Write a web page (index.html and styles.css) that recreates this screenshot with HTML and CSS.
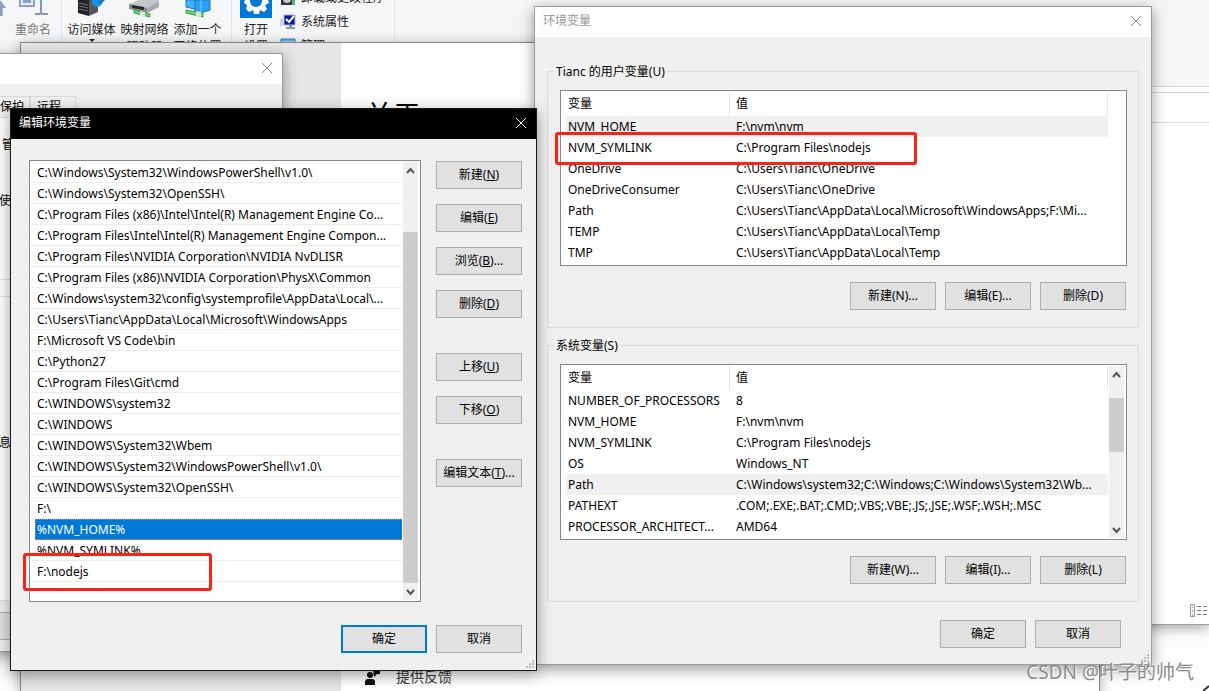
FILE: index.html
```html
<!DOCTYPE html>
<html lang="zh-CN">
<head>
<meta charset="utf-8">
<title>环境变量</title>
<link rel="stylesheet" href="styles.css">
</head>
<body>
<main class="desktop">

  <section class="explorer" aria-label="文件资源管理器">
    <div class="ribbon">
      <div class="ribbon-group group-rename">
        <svg class="cut-arrow" width="9" height="18" viewBox="0 0 9 18"><path d="M0 0h1l6 8H3v9H0z" fill="#8fa0bd"/></svg>
        <button class="tool faded">
          <svg width="34" height="18" viewBox="0 0 34 18"><path d="M4 0v6h14V0" fill="#e9edf5" stroke="#8fa1c0" stroke-width="2"/><path d="M7 0h8v3H7z" fill="#8fa1c0"/><path d="M19 14h4q2 0 2-2V0M32 14h-5q-2 0-2-2V0" fill="none" stroke="#8497b8" stroke-width="2"/></svg>
          <span>重命名</span>
        </button>
      </div>
      <div class="ribbon-group group-network">
        <button class="tool">
          <svg width="34" height="18" viewBox="0 0 34 18"><path d="M3 0l11-1v17L3 13z" fill="#202225"/><path d="M14 0l9 0v12l-9 4z" fill="#54585d"/><path d="M4 3l9 2M4 6l9 2M4 9l9 2" stroke="#777" stroke-width="1"/><path d="M17 0l9-2 2 4q-2 5-7 5-5-2-4-7z" fill="#1592e6"/><path d="M24 3l6-4" stroke="#126bb5" stroke-width="2"/></svg>
          <span>访问媒体<i class="caret"></i></span>
        </button>
        <button class="tool">
          <svg width="34" height="18" viewBox="0 0 34 18"><path d="M1 4l10-4h20v5L19 12 1 8z" fill="#c5c8ca"/><path d="M1 4l18 4v5L1 9z" fill="#868b8e"/><path d="M19 8l12-6v5l-12 6z" fill="#a6aaad"/><path d="M4 5l12 2v3L4 8z" fill="#26292b"/><path d="M6 10l16 4v3L6 13z" fill="#70d276" stroke="#3c9d46"/><path d="M12 11l5 1v5l-5-1z" fill="#d8e8d9"/></svg>
          <span>映射网络<br>驱动器</span>
        </button>
        <button class="tool">
          <svg width="34" height="18" viewBox="0 0 34 18"><path d="M5 0h12v10L5 7z" fill="#42b3fb" stroke="#147bc4"/><path d="M14 0h15v10l-13 4-2-3z" fill="#2ca0f2" stroke="#1173bb"/><path d="M20 0v13" stroke="#81ccff"/><path d="M5 10l17 3v4L5 13z" fill="#70d276" stroke="#3c9d46"/><path d="M15 11l5 1v5l-5-1z" fill="#d8e8d9"/></svg>
          <span>添加一个<br>网络位置</span>
        </button>
      </div>
      <div class="ribbon-group group-system">
        <button class="tool">
          <svg width="32" height="18" viewBox="0 0 32 18"><path d="M0 0h32v18H0z" fill="#0078d7"/><path d="M5 0l-1 3 3 2-1 4 3 3 4-2 1 4h5l1-4 4 2 3-3-2-4 4-2-1-3z" fill="#fff"/><circle cx="16" cy="1" r="6" fill="#0078d7"/></svg>
          <span>打开<br>设置</span>
        </button>
        <ul class="commands">
          <li><svg width="16" height="16" viewBox="0 0 16 16"><path d="M1 0h11v15H1z" fill="#343638"/><circle cx="7" cy="9" r="4" fill="#c7c9ca"/><circle cx="7" cy="9" r="1" fill="#222"/><path d="M12 8h3v7h-3z" fill="#5daa75"/></svg>卸载或更改程序</li>
          <li><svg width="16" height="16" viewBox="0 0 16 16"><path d="M4 1h11v10H4z" fill="#0717a4" stroke="#a8b5c6"/><path d="M6 5l3 3 5-6" fill="none" stroke="#fff" stroke-width="2"/><path d="M9 11h3v2h3v2H6v-2h3z" fill="#8b98a8"/><path d="M0 5h3v7H0z" fill="#cbd3dc"/></svg>系统属性</li>
          <li><svg width="16" height="16" viewBox="0 0 16 16"><path d="M1 1h14v12H1z" fill="#68b7e6" stroke="#397eaa"/><path d="M2 4h12" stroke="#eaf7ff"/></svg>管理</li>
        </ul>
      </div>
    </div>
    <div class="address-bar"></div>
    <div class="file-area"></div>
    <footer class="status">
      <svg width="17" height="14" viewBox="0 0 17 14"><path d="M.5.5h4v12h-4z" fill="#f5f5f5" stroke="#999"/><path d="M2 3h1M2 7h1M2 11h1" stroke="#8b5555"/><path d="M7 2.500h4m2 0h4M7 6.500h4m2 0h4M7 10.500h4m2 0h4" stroke="#777"/></svg>
    </footer>
  </section>

  <section class="settings" aria-label="设置">
    <aside class="settings-nav"></aside>
    <div class="settings-page">
      <h1>关于</h1>
      <a class="feedback" href="#feedback">
        <svg width="16" height="16" viewBox="0 0 16 16"><circle cx="5" cy="6" r="3" fill="#111"/><path d="M0 16v-3q0-3 3-3h4q3 0 3 3v3zM8 1h7v4h-3l-3 3z" fill="#111"/></svg>
        <span>提供反馈</span>
      </a>
    </div>
  </section>

  <section class="window properties" aria-label="系统属性">
    <header class="titlebar">
      <span></span>
      <button class="close" aria-label="关闭"><svg width="12" height="12" viewBox="0 0 12 12"><path d="M1 1l10 10M11 1L1 11"/></svg></button>
    </header>
    <div class="tabs"><button>保护</button><button>远程</button></div>
    <div class="properties-page">
      <p>管</p>
      <p class="second-note">使</p>
      <div class="blank-group"></div>
      <p class="third-note">息</p>
    </div>
    <footer class="properties-footer"><button class="btn" aria-label="确定"></button></footer>
  </section>

  <section class="window environment" aria-label="环境变量">
    <header class="titlebar">
      <h2>环境变量</h2>
      <button class="close" aria-label="关闭"><svg width="12" height="12" viewBox="0 0 12 12"><path d="M1 1l10 10M11 1L1 11"/></svg></button>
    </header>
    <div class="environment-body">
      <fieldset>
        <legend>Tianc 的用户变量(U)</legend>
        <div class="listbox variables">
          <table>
            <thead><tr><th class="name">变量</th><th>值</th></tr></thead>
            <tbody>
              <tr class="current"><td>NVM_HOME</td><td>F:\nvm\nvm</td></tr>
              <tr><td>NVM_SYMLINK</td><td>C:\Program Files\nodejs</td></tr>
              <tr><td>OneDrive</td><td>C:\Users\Tianc\OneDrive</td></tr>
              <tr><td>OneDriveConsumer</td><td>C:\Users\Tianc\OneDrive</td></tr>
              <tr><td>Path</td><td>C:\Users\Tianc\AppData\Local\Microsoft\WindowsApps;F:\Mi...</td></tr>
              <tr><td>TEMP</td><td>C:\Users\Tianc\AppData\Local\Temp</td></tr>
              <tr><td>TMP</td><td>C:\Users\Tianc\AppData\Local\Temp</td></tr>
            </tbody>
          </table>
          <div class="scroll-gutter"></div>
          <div class="mark mark-symlink"></div>
        </div>
        <div class="button-row">
          <button class="btn">新建(N)...</button><button class="btn">编辑(E)...</button><button class="btn">删除(D)</button>
        </div>
      </fieldset>
      <fieldset>
        <legend>系统变量(S)</legend>
        <div class="listbox variables">
          <table>
            <thead><tr><th class="name">变量</th><th>值</th></tr></thead>
            <tbody>
              <tr><td>NUMBER_OF_PROCESSORS</td><td>8</td></tr>
              <tr><td>NVM_HOME</td><td>F:\nvm\nvm</td></tr>
              <tr><td>NVM_SYMLINK</td><td>C:\Program Files\nodejs</td></tr>
              <tr><td>OS</td><td>Windows_NT</td></tr>
              <tr class="current"><td>Path</td><td>C:\Windows\system32;C:\Windows;C:\Windows\System32\Wb...</td></tr>
              <tr><td>PATHEXT</td><td>.COM;.EXE;.BAT;.CMD;.VBS;.VBE;.JS;.JSE;.WSF;.WSH;.MSC</td></tr>
              <tr><td>PROCESSOR_ARCHITECT...</td><td>AMD64</td></tr>
            </tbody>
          </table>
          <div class="scrollbar scroll-system">
            <svg class="up" width="9" height="8" viewBox="0 0 9 8"><path d="M1 6l3.500-4L8 6"/></svg>
            <div class="thumb"></div>
            <svg class="down" width="9" height="8" viewBox="0 0 9 8"><path d="M1 2l3.500 4L8 2"/></svg>
          </div>
        </div>
        <div class="button-row">
          <button class="btn">新建(W)...</button><button class="btn">编辑(I)...</button><button class="btn">删除(L)</button>
        </div>
      </fieldset>
      <footer class="button-row environment-footer"><button class="btn">确定</button><button class="btn">取消</button></footer>
    </div>
    <svg class="grip" width="8" height="8" viewBox="0 0 8 8"><path d="M6 0h2v2H6zM3 3h2v2H3zM6 3h2v2H6zM0 6h2v2H0zM3 6h2v2H3zM6 6h2v2H6z"/></svg>
  </section>

  <section class="window editor" aria-label="编辑环境变量">
    <header class="titlebar">
      <h2>编辑环境变量</h2>
      <button class="close" aria-label="关闭"><svg width="12" height="12" viewBox="0 0 12 12"><path d="M1 1l10 10M11 1L1 11"/></svg></button>
    </header>
    <div class="editor-body">
      <div class="listbox paths">
        <ul>
          <li>C:\Windows\System32\WindowsPowerShell\v1.0\</li>
          <li>C:\Windows\System32\OpenSSH\</li>
          <li>C:\Program Files (x86)\Intel\Intel(R) Management Engine Co...</li>
          <li>C:\Program Files\Intel\Intel(R) Management Engine Compon...</li>
          <li>C:\Program Files\NVIDIA Corporation\NVIDIA NvDLISR</li>
          <li>C:\Program Files (x86)\NVIDIA Corporation\PhysX\Common</li>
          <li>C:\Windows\system32\config\systemprofile\AppData\Local\...</li>
          <li>C:\Users\Tianc\AppData\Local\Microsoft\WindowsApps</li>
          <li>F:\Microsoft VS Code\bin</li>
          <li>C:\Python27</li>
          <li>C:\Program Files\Git\cmd</li>
          <li>C:\WINDOWS\system32</li>
          <li>C:\WINDOWS</li>
          <li>C:\WINDOWS\System32\Wbem</li>
          <li>C:\WINDOWS\System32\WindowsPowerShell\v1.0\</li>
          <li>C:\WINDOWS\System32\OpenSSH\</li>
          <li>F:\</li>
          <li class="selected">%NVM_HOME%</li>
          <li>%NVM_SYMLINK%</li>
          <li>F:\nodejs</li>
        </ul>
        <div class="scrollbar scroll-paths">
          <svg class="up" width="9" height="8" viewBox="0 0 9 8"><path d="M1 6l3.500-4L8 6"/></svg>
          <div class="thumb"></div>
          <svg class="down" width="9" height="8" viewBox="0 0 9 8"><path d="M1 2l3.500 4L8 2"/></svg>
        </div>
        <div class="mark mark-nodejs"></div>
      </div>
      <div class="actions">
        <div><button class="btn">新建(<u>N</u>)</button><button class="btn">编辑(<u>E</u>)</button><button class="btn">浏览(<u>B</u>)...</button><button class="btn">删除(<u>D</u>)</button></div>
        <div><button class="btn">上移(<u>U</u>)</button><button class="btn">下移(<u>O</u>)</button></div>
        <div><button class="btn">编辑文本(<u>T</u>)...</button></div>
      </div>
    </div>
    <footer class="button-row editor-footer"><button class="btn default">确定</button><button class="btn">取消</button></footer>
    <svg class="grip" width="8" height="8" viewBox="0 0 8 8"><path d="M6 0h2v2H6zM3 3h2v2H3zM6 3h2v2H6zM0 6h2v2H0zM3 6h2v2H3zM6 6h2v2H6z"/></svg>
  </section>

  <div class="watermark">CSDN @叶子的帅气</div>
  <svg class="corner-stroke" width="6" height="6" viewBox="0 0 6 6"><path d="M0 6l6-5" stroke="#333" stroke-width="2"/></svg>
</main>
</body>
</html>
```
FILE: styles.css
```css
* { box-sizing: border-box; }
body { margin: 0; color: #000; font: 12px/20px "Noto Sans", "Noto Sans CJK SC", sans-serif; }
button { font: inherit; color: inherit; padding: 0; }
h1, h2, p, ul { margin: 0; padding: 0; font-weight: 400; list-style: none; }
.desktop { position: relative; height: 100vh; overflow: hidden; background: #fdfdfd; white-space: nowrap; }

/* Background explorer window */
.explorer { position: absolute; inset: 0 0 66px; display: flex; flex-direction: column; background: #fff; border-bottom: 1px solid #a0a0a0; box-shadow: 0 3px 12px rgba(0,0,0,.35); }
.ribbon { display: flex; height: 87px; background: #f5f6f7; border-bottom: 1px solid #d5d6d7; overflow: hidden; }
.ribbon-group { display: flex; align-items: flex-start; height: 87px; border-right: 1px solid #e0e1e2; }
.group-rename { width: 62px; }
.group-network { width: 170px; padding-left: 3px; }
.group-system { width: 163px; padding-left: 8px; }
.cut-arrow { width: 8px; }
.tool { display: flex; flex-direction: column; align-items: center; width: 53px; border: 0; background: none; color: #222; line-height: 17px; }
.tool svg { margin-bottom: 3px; }
.group-system .tool { width: 32px; }
.tool span { position: relative; }
.faded { color: #777; width: 50px; }
.caret { position: absolute; left: 22px; top: 18px; border: 3px solid transparent; border-top-color: #222; border-bottom: 0; }
.commands { margin: -14px 0 0 8px; color: #222; }
.commands li { display: flex; align-items: center; gap: 5px; height: 24px; }
.address-bar { height: 31px; margin-top: 5px; border: solid #d9d9d9; border-width: 1px 0; }
.file-area { flex: 1; }
.status { display: flex; justify-content: flex-end; height: 20px; padding-right: 2px; }

/* Background settings window */
.settings { position: absolute; left: 20px; top: 42px; right: 109px; bottom: -8px; display: flex; background: #fff; border: 1px solid #858585; box-shadow: 0 2px 12px rgba(0,0,0,.3); }
.settings-nav { width: 320px; background: #e6e6e6; }
.settings-page { display: flex; flex-direction: column; justify-content: space-between; padding: 54px 24px 11px; }
.settings h1 { font-size: 28px; line-height: 36px; }
.feedback { display: flex; align-items: center; gap: 15px; color: #333; font-size: 14px; text-decoration: none; }

/* Dialog windows */
.window { position: absolute; background: #f0f0f0; border: 1px solid #9b9b9b; box-shadow: 0 4px 14px rgba(0,0,0,.4); }
.titlebar { display: flex; align-items: center; justify-content: space-between; height: 30px; padding: 0 9px 2px 8px; background: #fff; color: #999; }
.titlebar h2 { font-size: 12px; }
.close { display: flex; border: 0; background: none; }
.close path { fill: none; stroke: #888; stroke-width: 1; }
.btn { width: 86px; height: 28px; border: 1px solid #adadad; background: #e1e1e1; white-space: nowrap; }
.btn.default { border: 2px solid #0078d7; }
.btn u { text-underline-offset: 1px; }
.button-row { display: flex; justify-content: flex-end; gap: 9px; }
.listbox { position: relative; display: flex; background: #fff; border: 1px solid #828790; }
.grip { position: absolute; right: 2px; bottom: 2px; fill: #bcbcbc; }
.scrollbar { display: flex; flex-direction: column; align-items: center; width: 15px; background: #f0f0f0; }
.scrollbar svg { flex: none; margin: 5px 0 4px; fill: none; stroke: #555; stroke-width: 2; }
.scrollbar .thumb { width: 15px; background: #cdcdcd; }
.scrollbar .down { margin-top: auto; }
.mark { position: absolute; border: 3px solid #fb2114; border-radius: 3px; }

/* System properties */
.properties { left: -127px; top: 53px; width: 410px; height: 599px; display: flex; flex-direction: column; }
.tabs { display: flex; height: 33px; padding: 12px 0 0 66px; }
.tabs button { border: 1px solid #d9d9d9; border-bottom: 0; background: #f0f0f0; }
.tabs button:first-child { width: 90px; padding-right: 5px; text-align: right; }
.tabs button:last-child { width: 46px; padding-right: 8px; }
.properties-page { flex: 1; margin: 0 12px 0 10px; padding: 17px 0 0 117px; background: #fff; border: 1px solid #dcdcdc; border-right: 0; }
.second-note { margin-top: 36px; margin-left: -3px; }
.blank-group { height: 18px; margin: 68px 0 0 -117px; border: solid #dcdcdc; border-width: 1px 0; }
.third-note { margin-top: 136px; margin-left: -3px; }
.properties-footer { padding: 11px 0 11px 52px; line-height: 0; }

/* Environment variables */
.environment { left: 534px; top: 6px; width: 618px; }
.environment-body { padding: 25px 12px 16px; }
fieldset { min-width: 0; margin: 0 0 8px; padding: 10px 11px 17px 12px; border: 1px solid #dcdcdc; }
legend { height: 18px; margin-left: -6px; padding: 0 2px; line-height: 20px; }
.variables { height: 176px; margin-bottom: 16px; padding: 1px 2px 1px 5px; }
.variables table { flex: 1; align-self: flex-start; table-layout: fixed; border-collapse: separate; border-spacing: 0; margin-right: 1px; }
.variables th { height: 24px; padding: 0 6px; border-right: 1px solid #e5e5e5; text-align: left; font-weight: 400; }
.variables .name { width: 164px; }
.variables th:first-child, .variables td:first-child { padding-left: 2px; padding-right: 0; }
.variables td { height: 21px; padding: 0 0 0 6px; }
.variables .current { background: #f0f0f0; }
.scroll-gutter { width: 15px; }
.scroll-system .thumb { height: 54px; margin-top: 15px; }
fieldset .button-row { padding-right: 1px; }
.environment-footer { margin-top: 18px; padding-right: 18px; }
.mark-symlink { left: -6px; top: 41px; width: 362px; height: 33px; }

/* Path editor */
.editor { left: 10px; top: 108px; width: 527px; border-color: #1a1a1a; }
.editor .titlebar { background: #000; color: #fff; }
.editor .close path { stroke: #fff; }
.editor-body { display: flex; justify-content: space-between; padding: 21px 14px 0 18px; }
.paths { width: 392px; height: 442px; padding: 1px; }
.paths ul { flex: 1; min-width: 0; margin-right: 1px; }
.paths li { height: 21px; padding-left: 6px; border-bottom: 1px solid #ededed; line-height: 22px; }
.paths .selected { margin-left: 4px; padding-left: 1px; border: 1px dotted #e08a3c; border-width: 1px 0 1px 1px; line-height: 20px; background: #0078d7; color: #fff; }
.scroll-paths { margin-right: 1px; }
.scroll-paths .thumb { height: 351px; margin-top: 53px; }
.actions { display: flex; flex-direction: column; gap: 35px; padding-top: 1px; }
.actions div { display: flex; flex-direction: column; gap: 15px; }
.editor-footer { padding: 23px 14px 17px; }
.mark-nodejs { left: -7px; top: 392px; width: 189px; height: 38px; }

.watermark { position: absolute; right: 15px; bottom: 4px; color: #8b8b8b; font-size: 19px; line-height: 30px; text-shadow: 1px 1px #fff; }
.corner-stroke { position: absolute; right: 0; bottom: 0; }
```
